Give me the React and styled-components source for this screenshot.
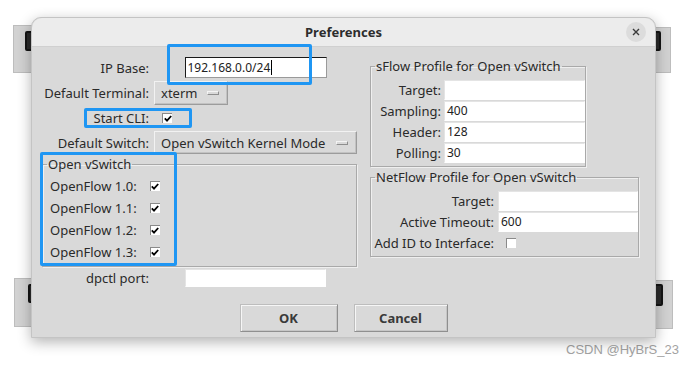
import React from 'react';
import styled, { createGlobalStyle } from 'styled-components';

const Global = createGlobalStyle`
  html, body { margin: 0; padding: 0; background: #fff; }
  body { font-family: "Noto Sans", "DejaVu Sans", sans-serif; }
`;

const Desktop = styled.div`
  position: relative;
  width: 692px;
  height: 367px;
  background: #fff;
  overflow: hidden;
`;

const BgWindow = styled.div`
  position: absolute;
  left: ${({ x }) => x}px;
  top: ${({ y }) => y}px;
  width: ${({ w }) => w}px;
  height: ${({ h }) => h}px;
  box-sizing: border-box;
  background: #d2d2d2;
  border: 1px solid #bdbdbd;
  display: flex;
  align-items: flex-start;
  padding: ${({ pad }) => pad};
`;

const TermIcon = styled.div`
  width: ${({ w }) => w}px;
  height: ${({ h }) => h}px;
  box-sizing: border-box;
  border: 2px solid #141414;
  border-radius: 2px;
  background: #2a2a2a;
`;

const Dialog = styled.div`
  position: absolute;
  left: 31px;
  top: 17px;
  width: 625px;
  height: 321px;
  box-sizing: border-box;
  z-index: 2;
  background: #d9d9d9;
  border: 1px solid #c4c4c4;
  border-radius: 10px 10px 0 0;
  box-shadow: 0 4px 14px rgba(0, 0, 0, 0.3);
  display: flex;
  flex-direction: column;
  color: #2a2a2a;
  font-size: 13px;
`;

const TitleBar = styled.div`
  height: 28px;
  flex: none;
  display: grid;
  grid-template-columns: 1fr auto 1fr;
  align-items: center;
  background: #ececec;
  border-bottom: 1px solid #d0d0d0;
  border-radius: 10px 10px 0 0;
`;

const Title = styled.div`
  grid-column: 2;
  font-weight: 700;
  font-size: 13px;
  color: #2d2d2d;
`;

const CloseBtn = styled.div`
  justify-self: end;
  margin-right: 9px;
  width: 20px;
  height: 20px;
  border-radius: 50%;
  background: #dcdcdc;
  display: flex;
  align-items: center;
  justify-content: center;
`;

const Body = styled.div`
  display: flex;
  padding-top: 8px;
`;

const LeftCol = styled.div`
  display: grid;
  grid-template-columns: 117px 203px;
  grid-template-rows: 25px 25px 25px 25px 112px 22px;
  column-gap: 5px;
  align-items: center;
`;

const Label = styled.div`
  justify-self: end;
  white-space: nowrap;
  line-height: 16px;
`;

const Entry = styled.div`
  justify-self: ${({ center }) => (center ? 'center' : 'start')};
  width: ${({ w }) => w}px;
  height: ${({ h }) => h || 20}px;
  box-sizing: border-box;
  background: #fff;
  border: 1px solid;
  border-color: ${({ focus }) =>
    focus ? '#1a1a1a #9a9a9a #9a9a9a #1a1a1a' : '#e4e4e4 #fff #fff #e4e4e4'};
  font-size: 12px;
  line-height: ${({ h }) => (h || 20) - 2}px;
  padding-left: 2px;
  color: #222;
  display: flex;
  align-items: center;
`;

const Caret = styled.span`
  display: inline-block;
  width: 1px;
  height: 15px;
  background: #000;
  margin-left: 1px;
`;

const MenuButton = styled.div`
  justify-self: start;
  width: ${({ w }) => w}px;
  height: ${({ h }) => h}px;
  box-sizing: border-box;
  border: 1px solid;
  border-color: #f2f2f2 #9c9c9c #9c9c9c #f2f2f2;
  box-shadow: inset -1px -1px 0 #c2c2c2;
  display: flex;
  align-items: center;
  justify-content: space-between;
  padding: 0 8px 0 6px;
`;

const Indicator = styled.span`
  width: 12px;
  height: 4px;
  box-sizing: border-box;
  border: 1px solid;
  border-color: #f4f4f4 #8e8e8e #8e8e8e #f4f4f4;
`;

const Check = styled.div`
  justify-self: start;
  margin-left: ${({ ml }) => ml || 0}px;
  width: 10px;
  height: 10px;
  box-sizing: border-box;
  background: #fff;
  border-top: 1px solid #8a8a8a;
  border-left: 1px solid #8a8a8a;
  display: flex;
  align-items: center;
  justify-content: center;
`;

const Frame = styled.fieldset`
  margin: ${({ m }) => m || 0};
  padding: 0;
  min-width: 0;
  box-sizing: border-box;
  height: ${({ h }) => h}px;
  border: 1px solid #a9a9a9;
  box-shadow: inset 1px 1px 0 #efefef, 1px 1px 0 #efefef;
  grid-column: ${({ span }) => (span ? '1 / -1' : 'auto')};
  align-self: start;
`;

const Legend = styled.legend`
  margin-left: 4px;
  padding: 0 1px;
  line-height: 18px;
  white-space: nowrap;
`;

const FrameGrid = styled.div`
  display: grid;
  grid-template-columns: ${({ cols }) => cols};
  grid-auto-rows: ${({ row }) => row}px;
  column-gap: ${({ gap }) => gap}px;
  align-items: center;
  padding: ${({ pad }) => pad};
`;

const FlowLabel = styled.div`
  white-space: nowrap;
`;

const RightCol = styled.div`
  display: flex;
  flex-direction: column;
  margin: 2px 0 0 13px;
  width: 275px;
`;

const ButtonRow = styled.div`
  display: flex;
  justify-content: center;
  gap: 16px;
  padding-top: 15px;
`;

const Button = styled.div`
  width: ${({ w }) => w}px;
  height: 28px;
  box-sizing: border-box;
  border: 1px solid;
  border-color: #bdbdbd #8f8f8f #8f8f8f #bdbdbd;
  box-shadow: inset 1px 1px 0 #f6f6f6, inset -1px -1px 0 #c6c6c6;
  display: flex;
  align-items: center;
  justify-content: center;
  font-weight: 700;
  color: #3a3a3a;
`;

const Highlight = styled.div`
  position: absolute;
  left: ${({ x }) => x}px;
  top: ${({ y }) => y}px;
  width: ${({ w }) => w}px;
  height: ${({ h }) => h}px;
  box-sizing: border-box;
  border: 3px solid #1f96f3;
  border-radius: 2px;
  z-index: 5;
`;

const Watermark = styled.div`
  position: absolute;
  left: 566px;
  top: 342px;
  font-family: "Liberation Sans", Arial, sans-serif;
  font-size: 13px;
  color: #a3a3a3;
  white-space: nowrap;
`;

const Tick = () => (
  <svg width="8" height="7" viewBox="0 0 8 7">
    <path d="M0.8 3.4 L3 5.6 L7.2 1" stroke="#000" strokeWidth="1.8" fill="none" />
  </svg>
);

const sflow = [
  ['Target:', ''],
  ['Sampling:', '400'],
  ['Header:', '128'],
  ['Polling:', '30'],
];

const versions = ['1.0', '1.1', '1.2', '1.3'];

export default function App() {
  return (
    <Desktop>
      <Global />
      <BgWindow x={13} y={25} w={22} h={48} pad="5px 0 0 11px">
        <TermIcon w={12} h={20} />
      </BgWindow>
      <BgWindow x={630} y={27} w={41} h={46} pad="3px 0 0 20px">
        <TermIcon w={10} h={20} />
      </BgWindow>
      <BgWindow x={14} y={278} w={22} h={49} pad="5px 0 0 13px">
        <TermIcon w={10} h={19} />
      </BgWindow>
      <BgWindow x={630} y={280} w={43} h={49} pad="3px 0 0 20px">
        <TermIcon w={12} h={22} />
      </BgWindow>

      <Dialog>
        <TitleBar>
          <Title>Preferences</Title>
          <CloseBtn>
            <svg width="8" height="8" viewBox="0 0 8 8">
              <path d="M1 1 L7 7 M7 1 L1 7" stroke="#3a3a3a" strokeWidth="1.4" />
            </svg>
          </CloseBtn>
        </TitleBar>

        <Body>
          <LeftCol>
            <Label>IP Base:</Label>
            <Entry center w={142} h={21} focus>
              192.168.0.0/24<Caret />
            </Entry>

            <Label>Default Terminal:</Label>
            <MenuButton w={74} h={24}>
              xterm
              <Indicator />
            </MenuButton>

            <Label>Start CLI:</Label>
            <Check ml={8}>
              <Tick />
            </Check>

            <Label>Default Switch:</Label>
            <MenuButton w={203} h={23}>
              Open vSwitch Kernel Mode
              <Indicator />
            </MenuButton>

            <Frame span h={112} m="0 0 0 10px">
              <Legend>Open vSwitch</Legend>
              <FrameGrid cols="auto 1fr" row={22} gap={13} pad="2px 0 0 7px">
                {versions.map((v) => (
                  <React.Fragment key={v}>
                    <FlowLabel>OpenFlow {v}:</FlowLabel>
                    <Check>
                      <Tick />
                    </Check>
                  </React.Fragment>
                ))}
              </FrameGrid>
            </Frame>

            <Label>dpctl port:</Label>
            <Entry center w={141} h={18} />
          </LeftCol>

          <RightCol>
            <Frame h={110}>
              <Legend>sFlow Profile for Open vSwitch</Legend>
              <FrameGrid cols="69px 141px" row={21} gap={3} pad="4px 0 0 1px">
                {sflow.map(([l, v]) => (
                  <React.Fragment key={l}>
                    <Label>{l}</Label>
                    <Entry w={141}>{v}</Entry>
                  </React.Fragment>
                ))}
              </FrameGrid>
            </Frame>
            <Frame h={89} m="1px 0 0 0">
              <Legend>NetFlow Profile for Open vSwitch</Legend>
              <FrameGrid cols="122px 140px" row={21} gap={4} pad="4px 0 0 1px">
                <Label>Target:</Label>
                <Entry w={140} />
                <Label>Active Timeout:</Label>
                <Entry w={140}>600</Entry>
                <Label>Add ID to Interface:</Label>
                <Check ml={8} />
              </FrameGrid>
            </Frame>
          </RightCol>
        </Body>

        <ButtonRow>
          <Button w={98}>OK</Button>
          <Button w={94}>Cancel</Button>
        </ButtonRow>
      </Dialog>

      <Highlight x={167} y={44} w={145} h={41} />
      <Highlight x={84} y={108} w={108} h={20} />
      <Highlight x={40} y={152} w={137} h={114} />

      <Watermark>CSDN @HyBrS_23</Watermark>
    </Desktop>
  );
}
